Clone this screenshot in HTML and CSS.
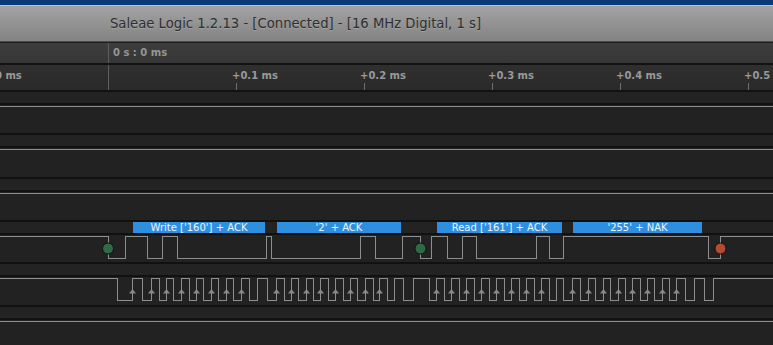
FILE: index.html
```html
<!DOCTYPE html>
<html lang="en">
<head>
    <meta charset="UTF-8">
    <meta name="viewport" content="width=device-width, initial-scale=1.0">
    <title>Saleae Logic 1.2.13</title>
    <link rel="stylesheet" href="styles.css">
</head>
<body>

    <div class="desktop-bar"></div>
    <header class="titlebar">Saleae Logic 1.2.13 - [Connected] - [16 MHz Digital, 1 s]</header>
    <div class="titlebar-edge"></div>

    <div class="cursor-row">
        <span class="origin">0 s : 0 ms</span>
    </div>

    <div class="ruler">
        <div class="ruler-lead"><span class="ruler-label first">0 ms</span></div>
        <div class="ruler-cell zero"></div>
        <div class="ruler-cell"><span class="ruler-label">+0.1 ms</span><span class="tick"></span></div>
        <div class="ruler-cell"><span class="ruler-label">+0.2 ms</span><span class="tick"></span></div>
        <div class="ruler-cell"><span class="ruler-label">+0.3 ms</span><span class="tick"></span></div>
        <div class="ruler-cell"><span class="ruler-label">+0.4 ms</span><span class="tick"></span></div>
        <div class="ruler-cell"><span class="ruler-label">+0.5 ms</span><span class="tick"></span></div>
    </div>

    <div class="channel">
        <div class="channel-strip"></div>
        <div class="channel-area"><div class="trace-flat"></div></div>
    </div>
    <div class="channel tall">
        <div class="channel-strip"></div>
        <div class="channel-area"><div class="trace-flat"></div></div>
    </div>
    <div class="channel">
        <div class="channel-strip"></div>
        <div class="channel-area"><div class="trace-flat"></div></div>
    </div>

    <!-- SDA -->
    <div class="channel">
        <div class="channel-strip">
            <span class="bubble" style="left:133px;width:132px">Write ['160'] + ACK</span>
            <span class="bubble" style="left:277px;width:124px">'2' + ACK</span>
            <span class="bubble" style="left:437px;width:125px">Read ['161'] + ACK</span>
            <span class="bubble" style="left:573px;width:129px">'255' + NAK</span>
        </div>
        <div class="channel-area">
            <svg class="wave" width="773" height="27" viewBox="0 0 773 27">
                <path id="sda" class="wave-line" d=""></path>
                <circle class="marker start" cx="108" cy="13.5" r="5.5"></circle>
                <circle class="marker start" cx="420.5" cy="13.5" r="5.5"></circle>
                <circle class="marker stop" cx="720.5" cy="13.5" r="5.5"></circle>
            </svg>
        </div>
    </div>

    <!-- SCL -->
    <div class="channel tall">
        <div class="channel-strip"></div>
        <div class="channel-area">
            <svg class="wave" width="773" height="28" viewBox="0 0 773 28">
                <path id="scl" class="wave-line" d=""></path>
                <g id="arrows"></g>
            </svg>
        </div>
    </div>

    <div class="channel">
        <div class="channel-strip"></div>
        <div class="channel-area"><div class="trace-flat"></div></div>
    </div>

    <script>
        const HI = 1.5;
        const LO = 23.5;
        const WIDTH = 773;

        // x positions where the line flips, starting from the high level
        const sdaEdges = [108, 125, 147, 162, 177, 266, 271, 360, 375, 402, 420, 431,
                          447, 462, 476, 536, 549, 563, 708, 720];

        const sclEdges = [117,
            132, 142, 151, 159, 166, 173, 181, 189, 196, 203, 211, 218, 226, 233, 241, 249,
            257, 267,
            276, 284, 291, 298, 306, 313, 320, 328, 335, 343, 350, 357, 365, 373, 379, 387,
            394, 403,
            413, 429,
            436, 444, 451, 459, 466, 474, 481, 489, 496, 504, 511, 519, 526, 534, 541, 549,
            556, 563,
            572, 580, 588, 595, 603, 610, 618, 625, 632, 640, 647, 654, 662, 669, 676, 685,
            694, 704,
            713];

        const sampled = [132, 151, 166, 181, 196, 211, 226, 241,
                         276, 291, 306, 320, 335, 350, 365, 379,
                         436, 451, 466, 481, 496, 511, 526, 541,
                         572, 588, 603, 618, 632, 647, 662, 676];

        function wavePath(edges) {
            let high = true;
            let d = "M0 " + HI;
            edges.forEach(function (x) {
                d += " H" + (x + 0.5) + " V" + (high ? LO : HI);
                high = !high;
            });
            return d + " H" + WIDTH;
        }

        document.getElementById("sda").setAttribute("d", wavePath(sdaEdges));
        document.getElementById("scl").setAttribute("d", wavePath(sclEdges));

        let arrows = "";
        sampled.forEach(function (x) {
            let c = x + 0.5;
            arrows += '<polygon class="clock-arrow" points="' + (c - 3.5) + ',16.5 ' + (c + 3.5) + ',16.5 ' + c + ',12"></polygon>';
        });
        document.getElementById("arrows").innerHTML = arrows;
    </script>

</body>
</html>
```

FILE: styles.css
```css
body {
    margin: 0;
    width: 773px;
    height: 345px;
    overflow: hidden;
    background-color: #222;
    font-family: "DejaVu Sans", Verdana, sans-serif;
}
.desktop-bar {
    height: 5px;
    background-color: #0c3a78;
    border-bottom: 1px solid #b9c6d6;
}
.titlebar {
    height: 34px;
    padding-top: 1px;
    line-height: 34px;
    padding-left: 110px;
    background: linear-gradient(#a3a3a3, #838383);
    color: #2f2f2f;
    font-size: 13.2px;
    text-shadow: 0 1px 0 rgba(200, 200, 200, 0.35);
    white-space: nowrap;
}
.titlebar-edge {
    height: 1px;
    background-color: #4d4d4d;
    border-bottom: 1px solid #1d1d1d;
}
.cursor-row {
    height: 20px;
    background: linear-gradient(#3e3e3e, #363636);
    border-bottom: 2px solid #121212;
}
.origin {
    display: block;
    height: 20px;
    margin-left: 108px;
    padding-left: 4px;
    border-left: 1px solid #5e5e5e;
    line-height: 20px;
    color: #969696;
    font-size: 10px;
    font-weight: bold;
}
.ruler {
    display: flex;
    height: 25px;
    background: linear-gradient(#2f2f2f, #2a2a2a);
    border-bottom: 2px solid #121212;
    overflow: hidden;
}
.ruler-lead {
    flex: 0 0 108px;
}
.ruler-cell {
    flex: 0 0 128px;
    display: flex;
    flex-direction: column;
}
.ruler-cell.zero {
    border-left: 1px solid #5e5e5e;
    box-sizing: border-box;
}
.ruler-label {
    display: block;
    margin-left: -4px;
    padding-top: 5px;
    line-height: 12px;
    color: #9a9a9a;
    font-size: 10px;
    font-weight: bold;
    white-space: nowrap;
}
.ruler-label.first {
    margin-left: -5px;
}
.tick {
    display: block;
    margin-top: auto;
    height: 7px;
    width: 0;
    border-left: 1px solid #6f6f6f;
}
.channel-strip {
    position: relative;
    height: 11px;
    background-color: #232323;
    border-bottom: 2px solid #111;
}
.channel-area {
    height: 27px;
    background-color: #222;
    border-bottom: 2px solid #111;
}
.channel.tall .channel-area {
    height: 28px;
}
.trace-flat {
    height: 1px;
    margin-top: 1px;
    background-color: #8c8c8c;
}
.bubble {
    position: absolute;
    top: 0;
    height: 11px;
    background-color: #2e8fe0;
    color: #eef4fb;
    font-size: 10px;
    line-height: 11px;
    text-align: center;
    white-space: nowrap;
}
.wave {
    display: block;
}
.wave-line {
    fill: none;
    stroke: #8e8e8e;
    stroke-width: 1;
    shape-rendering: crispEdges;
}
.clock-arrow {
    fill: #8a8a8a;
}
.marker {
    stroke: #101010;
    stroke-width: 1;
}
.marker.start {
    fill: #2d6a45;
}
.marker.stop {
    fill: #b04c33;
}
```
